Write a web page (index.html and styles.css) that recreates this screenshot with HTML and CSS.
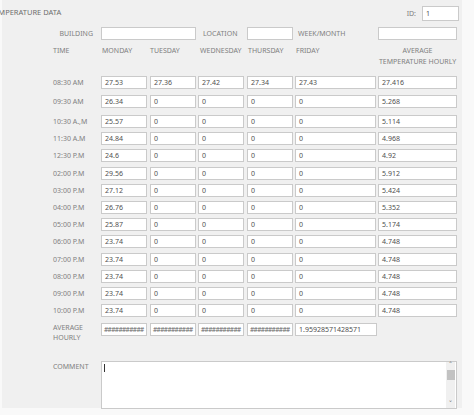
FILE: index.html
```html
<!DOCTYPE html>
<html>
<head>
<meta charset="utf-8">
<link rel="stylesheet" href="styles.css">
</head>
<body>
<div class="panel">
  <div class="top">
    <div class="title">TEMPERATURE DATA</div>
    <div class="idbox"><span class="lbl">ID:</span><div class="field idf">1</div></div>
  </div>
  <div class="grid info">
    <div class="lbl right">BUILDING</div>
    <div class="field wbuild"></div>
    <div class="lbl pl5">LOCATION</div>
    <div class="field"></div>
    <div class="lbl pl3">WEEK/MONTH</div>
    <div class="field wavg"></div>
  </div>
  <div class="grid head">
    <div class="lbl pl53">TIME</div>
    <div class="lbl pl1">MONDAY</div>
    <div class="lbl">TUESDAY</div>
    <div class="lbl pl2">WEDNESDAY</div>
    <div class="lbl pl1">THURSDAY</div>
    <div class="lbl pl1">FRIDAY</div>
    <div class="lbl center">AVERAGE<br>TEMPERATURE HOURLY</div>
  </div>
  <div class="rows">
    <div class="grid row first"><div class="lbl pl53">08:30 AM</div><div class="field">27.53</div><div class="field">27.36</div><div class="field">27.42</div><div class="field">27.34</div><div class="field wfri">27.43</div><div class="field wavg">27.416</div></div>
    <div class="grid row r2"><div class="lbl pl53">09:30 AM</div><div class="field">26.34</div><div class="field">0</div><div class="field">0</div><div class="field">0</div><div class="field wfri">0</div><div class="field wavg">5.268</div></div>
    <div class="grid row r3"><div class="lbl pl53">10:30 A.,M</div><div class="field">25.57</div><div class="field">0</div><div class="field">0</div><div class="field">0</div><div class="field wfri">0</div><div class="field wavg">5.114</div></div>
    <div class="grid row"><div class="lbl pl53">11:30 A.M</div><div class="field">24.84</div><div class="field">0</div><div class="field">0</div><div class="field">0</div><div class="field wfri">0</div><div class="field wavg">4.968</div></div>
    <div class="grid row"><div class="lbl pl53">12:30 P.M</div><div class="field">24.6</div><div class="field">0</div><div class="field">0</div><div class="field">0</div><div class="field wfri">0</div><div class="field wavg">4.92</div></div>
    <div class="grid row"><div class="lbl pl53">02:00 P.M</div><div class="field">29.56</div><div class="field">0</div><div class="field">0</div><div class="field">0</div><div class="field wfri">0</div><div class="field wavg">5.912</div></div>
    <div class="grid row"><div class="lbl pl53">03:00 P.M</div><div class="field">27.12</div><div class="field">0</div><div class="field">0</div><div class="field">0</div><div class="field wfri">0</div><div class="field wavg">5.424</div></div>
    <div class="grid row"><div class="lbl pl53">04:00 P.M</div><div class="field">26.76</div><div class="field">0</div><div class="field">0</div><div class="field">0</div><div class="field wfri">0</div><div class="field wavg">5.352</div></div>
    <div class="grid row"><div class="lbl pl53">05:00 P.M</div><div class="field">25.87</div><div class="field">0</div><div class="field">0</div><div class="field">0</div><div class="field wfri">0</div><div class="field wavg">5.174</div></div>
    <div class="grid row"><div class="lbl pl53">06:00 P.M</div><div class="field">23.74</div><div class="field">0</div><div class="field">0</div><div class="field">0</div><div class="field wfri">0</div><div class="field wavg">4.748</div></div>
    <div class="grid row"><div class="lbl pl53">07:00 P.M</div><div class="field">23.74</div><div class="field">0</div><div class="field">0</div><div class="field">0</div><div class="field wfri">0</div><div class="field wavg">4.748</div></div>
    <div class="grid row"><div class="lbl pl53">08:00 P.M</div><div class="field">23.74</div><div class="field">0</div><div class="field">0</div><div class="field">0</div><div class="field wfri">0</div><div class="field wavg">4.748</div></div>
    <div class="grid row"><div class="lbl pl53">09:00 P.M</div><div class="field">23.74</div><div class="field">0</div><div class="field">0</div><div class="field">0</div><div class="field wfri">0</div><div class="field wavg">4.748</div></div>
    <div class="grid row"><div class="lbl pl53">10:00 P.M</div><div class="field">23.74</div><div class="field">0</div><div class="field">0</div><div class="field">0</div><div class="field wfri">0</div><div class="field wavg">4.748</div></div>
  </div>
  <div class="grid avg">
    <div class="lbl pl53 two">AVERAGE<br>HOURLY</div>
    <div class="field hash">###########</div>
    <div class="field hash">###########</div>
    <div class="field hash">###########</div>
    <div class="field hash">###########</div>
    <div class="field wfri2">1.95928571428571</div>
  </div>
  <div class="grid comment">
    <div class="lbl pl53">COMMENT</div>
    <div class="textarea">
      <div class="tbody"><span class="caret"></span></div>
      <div class="sbar">
        <span class="arr">&#x02C4;</span>
        <span class="thumb"></span>
        <span class="fill"></span>
        <span class="arr">&#x02C5;</span>
      </div>
    </div>
  </div>
</div>
</body>
</html>
```
FILE: styles.css
```css
html, body {
  margin: 0;
  padding: 0;
}
body {
  background: #f9f9f9;
  font-family: "Noto Sans", "Open Sans", sans-serif;
  font-size: 7px;
  color: #808080;
  width: 474px;
  height: 415px;
  overflow: hidden;
  -webkit-font-smoothing: antialiased;
}
.panel {
  margin-left: 2px;
  width: 460px;
  height: 408px;
  background: #f0f0f0;
  padding-top: 6px;
  box-sizing: border-box;
}
.top {
  display: flex;
  justify-content: space-between;
  height: 15px;
}
.title {
  margin-left: -12px;
  margin-top: 1px;
  line-height: 11px;
  font-size: 7.5px;
  color: #6e6e6e;
}
.idbox {
  display: flex;
  align-items: center;
  margin-right: 3px;
}
.idbox .lbl {
  margin-right: 6px;
  margin-top: -1px;
}
.field {
  background: #fff;
  border: 1px solid #cacaca;
  box-sizing: border-box;
  width: 46px;
  height: 13px;
  line-height: 11px;
  padding-left: 3px;
  color: #505050;
  font-size: 7px;
  white-space: nowrap;
  overflow: hidden;
}
.idf {
  width: 37px;
  height: 15px;
  line-height: 13px;
}
.grid {
  display: grid;
  grid-template-columns: 99px 49px 48px 49px 48px 83px 79px;
}
.wbuild {
  grid-column: span 2;
  width: 95px;
}
.wfri { width: 81px; }
.wfri2 { width: 82px; }
.wavg { width: 79px; grid-column: 7; }
.info {
  margin-top: 6px;
  height: 13px;
}
.lbl {
  line-height: 13px;
  white-space: nowrap;
}
.right { text-align: right; padding-right: 8px; }
.pl5 { padding-left: 5px; }
.pl3 { padding-left: 3px; }
.pl2 { padding-left: 2px; }
.pl1 { padding-left: 1px; }
.pl53 { padding-left: 51px; }
.center { text-align: center; }
.head {
  margin-top: 5px;
  height: 31px;
}
.head .lbl {
  line-height: 11px;
}
.row {
  height: 13px;
  margin-top: 4.2px;
}
.row.first { margin-top: 0; }
.row.r2 { margin-top: 6px; }
.row.r3 { margin-top: 7px; }
.avg {
  margin-top: 6px;
  height: 36px;
}
.avg .field.hash {
  letter-spacing: -0.6px;
  color: #666;
  font-size: 6.5px;
  padding-left: 2px;
}
.two {
  line-height: 10px;
}
.comment {
  margin-top: 2px;
}
.comment .lbl {
  line-height: 11px;
}
.textarea {
  grid-column: 2 / span 6;
  width: 356px;
  height: 48px;
  box-sizing: border-box;
  border: 1px solid #cacaca;
  background: #fff;
  display: flex;
}
.tbody {
  flex: 1;
  padding: 2px 0 0 2px;
}
.caret {
  display: block;
  width: 0;
  height: 8px;
  border-left: 1px solid #333;
}
.sbar {
  width: 9px;
  margin-right: 1px;
  background: #f0f0f0;
  display: flex;
  flex-direction: column;
  align-items: center;
}
.arr {
  font-size: 7px;
  line-height: 7px;
  height: 7px;
  color: #666;
  font-family: "DejaVu Sans", sans-serif;
}
.thumb {
  width: 8px;
  height: 10px;
  background: #c2c2c2;
  margin-top: 1px;
}
.fill { flex: 1; }
```
